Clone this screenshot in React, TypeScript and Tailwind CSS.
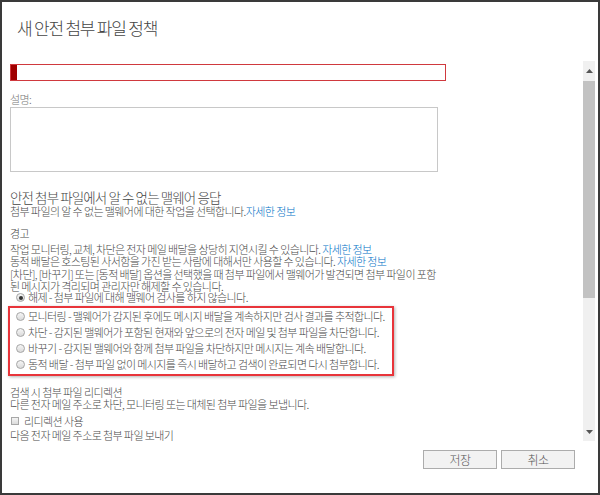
import { Fragment } from 'react'

const font = { fontFamily: '"Noto Sans CJK KR", "Noto Sans", sans-serif' }

function Radio({ checked }: { checked?: boolean }) {
  return (
    <span className="w-[9px] h-[9px] rounded-full border border-[#a4a4a4] bg-gradient-to-b from-[#f6f6f6] to-[#dadada] flex items-center justify-center shrink-0">
      {checked && <span className="w-[4px] h-[4px] rounded-full bg-[#333]" />}
    </span>
  )
}

const options = [
  '모니터링 - 맬웨어가 감지된 후에도 메시지 배달을 계속하지만 검사 결과를 추적합니다.',
  '차단 - 감지된 맬웨어가 포함된 현재와 앞으로의 전자 메일 및 첨부 파일을 차단합니다.',
  '바꾸기 - 감지된 맬웨어와 함께 첨부 파일을 차단하지만 메시지는 계속 배달합니다.',
  '동적 배달 - 첨부 파일 없이 메시지를 즉시 배달하고 검색이 완료되면 다시 첨부합니다.',
]

export default function App() {
  return (
    <div
      style={font}
      className="w-[600px] h-[495px] border-2 border-[#3a3a3a] bg-white text-[#4a4a4a] text-[11px] font-light tracking-[-0.6px] overflow-hidden"
    >
      <div className="h-[59px] pl-[15px] pt-[15px] text-[17px] leading-[22px] text-[#444] tracking-[-1.2px]">
        새 안전 첨부 파일 정책
      </div>

      <div className="flex h-[380px]">
        {/* content */}
        <div className="flex-1 pl-[8px] pt-[3px]">
          <div className="w-[436px] h-[17px] border border-[#d0393e] flex">
            <div className="w-[6px] bg-[#a00000]" />
          </div>

          <div className="mt-[12px] leading-[13px] text-[#777]">설명:</div>
          <div className="mt-[1px] w-[428px] h-[65px] border border-[#c8c8c8]" />

          <div className="mt-[16px] text-[13.5px] leading-[18px] text-[#444] tracking-[-0.9px]">
            안전 첨부 파일에서 알 수 없는 맬웨어 응답
          </div>
          <div className="-mt-[1px] leading-[13px]">
            첨부 파일의 알 수 없는 맬웨어에 대한 작업을 선택합니다.
            <span className="text-[#0072c6]">자세한 정보</span>
          </div>

          <div className="mt-[9px] leading-[12.5px]">
            <div>경고</div>
            <div className="mt-[3px]">
              작업 모니터링, 교체, 차단은 전자 메일 배달을 상당히 지연시킬 수 있습니다.{' '}
              <span className="text-[#0072c6]">자세한 정보</span>
            </div>
            <div>
              동적 배달은 호스팅된 사서함을 가진 받는 사람에 대해서만 사용할 수 있습니다.{' '}
              <span className="text-[#0072c6]">자세한 정보</span>
            </div>
            <div>
              [차단], [바꾸기] 또는 [동적 배달] 옵션을 선택했을 때 첨부 파일에서 맬웨어가 발견되면 첨부 파일이 포함
            </div>
            <div>된 메시지가 격리되며 관리자만 해제할 수 있습니다.</div>
          </div>

          <div className="flex items-center gap-[3px] h-[16px] pl-[6px] -mt-[3px]">
            <Radio checked />
            <span>해제 - 첨부 파일에 대해 맬웨어 검사를 하지 않습니다.</span>
          </div>

          <div className="w-[386px] border-2 border-[#e8343a] shadow-[1px_1px_3px_rgba(0,0,0,0.3)] py-[1px] -ml-[2px]">
            {options.map(o => (
              <Fragment key={o}>
                <div className="flex items-center gap-[3px] h-[16px] pl-[6px]">
                  <Radio />
                  <span>{o}</span>
                </div>
              </Fragment>
            ))}
          </div>

          <div className="mt-[10px] leading-[12px]">
            <div>검색 시 첨부 파일 리디렉션</div>
            <div>다른 전자 메일 주소로 차단, 모니터링 또는 대체된 첨부 파일을 보냅니다.</div>
            <div className="flex items-center gap-[5px] mt-[4px] h-[14px] pl-[1px]">
              <span className="w-[8px] h-[8px] border border-[#a8a8a8] bg-gradient-to-b from-[#f4f4f4] to-[#dcdcdc]" />
              <span>리디렉션 사용</span>
            </div>
            <div className="mt-[1px]">다음 전자 메일 주소로 첨부 파일 보내기</div>
          </div>
        </div>

        {/* scrollbar */}
        <div className="w-[12px] mr-[3px] bg-[#f0f0f0] flex flex-col">
          <div className="h-[20px] flex items-center justify-center">
            <svg width="7" height="4" viewBox="0 0 7 4"><path d="M3.5 0L7 4H0z" fill="#555" /></svg>
          </div>
          <div className="h-[217px] bg-[#c2c2c2]" />
          <div className="flex-1 flex items-end justify-center pb-[7px]">
            <svg width="7" height="4" viewBox="0 0 7 4"><path d="M0 0h7L3.5 4z" fill="#555" /></svg>
          </div>
        </div>
      </div>

      <div className="flex justify-end gap-[4px] pr-[23px] mt-[9px]">
        <button className="w-[74px] h-[19px] border border-[#acacac] bg-[#f2f2f2] text-[12px] leading-[17px] text-[#555]">
          저장
        </button>
        <button className="w-[74px] h-[19px] border border-[#acacac] bg-[#f2f2f2] text-[12px] leading-[17px] text-[#555]">
          취소
        </button>
      </div>
    </div>
  )
}
